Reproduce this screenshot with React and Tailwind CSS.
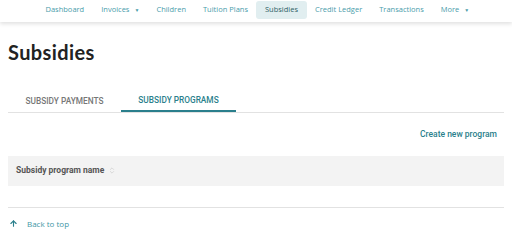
import { ArrowUp, ChevronsUpDown } from "lucide-react";

const NAV = [
  { label: "Dashboard" },
  { label: "Invoices", caret: true },
  { label: "Children" },
  { label: "Tuition Plans" },
  { label: "Subsidies", active: true },
  { label: "Credit Ledger" },
  { label: "Transactions" },
  { label: "More", caret: true },
];

export default function App() {
  return (
    <div className="w-[512px] h-[238px] bg-white overflow-hidden">
      {/* top nav */}
      <div className="h-[22px] flex items-start pl-[37px] shadow-[0_2px_4px_rgba(0,0,0,0.12)] font-['Open_Sans',sans-serif] text-[7.5px]">
        <div className="flex items-center pt-[1px]">
          {NAV.map((n) => (
            <div
              key={n.label}
              className={
                "h-[18px] px-[8.5px] rounded-[3px] flex items-center whitespace-nowrap " +
                (n.active ? "bg-[#e1eef0] text-[#2e5f66]" : "text-[#4a9dab]")
              }
            >
              {n.label}
              {n.caret && <span className="ml-[5px] text-[5px] leading-none">▼</span>}
            </div>
          ))}
        </div>
      </div>

      <div className="px-[8px]">
        <h1 className="mt-[17px] text-[20px] leading-[26px] font-bold text-[#222] font-['Lato',sans-serif] tracking-[0.4px]">
          Subsidies
        </h1>

        {/* tabs */}
        <div className="mt-[25px] flex border-b border-[#e2e2e2] font-['Roboto',sans-serif] text-[8.3px] font-medium">
          <div className="w-[113px] h-[22px] flex items-center justify-center text-[#777]">SUBSIDY PAYMENTS</div>
          <div className="w-[115px] h-[22px] flex items-center justify-center text-[#2a7f8c] border-b-2 border-[#2a7f8c] mb-[-1px]">
            SUBSIDY PROGRAMS
          </div>
        </div>

        <div className="flex justify-end pr-[7px] mt-[15px] font-['Roboto',sans-serif] text-[8.5px] font-medium text-[#2a7f8c]">
          Create new program
        </div>

        {/* table header */}
        <div className="mt-[15px] h-[30px] bg-[#f3f3f3] flex items-center pl-[8px] font-['Roboto',sans-serif] text-[8.5px] font-bold text-[#555]">
          Subsidy program name
          <ChevronsUpDown className="ml-[4px] w-[8px] h-[9px] text-[#bdbdbd]" strokeWidth={1.5} />
        </div>

        <div className="mt-[21px] border-t border-[#e2e2e2]" />

        <div className="mt-[10px] flex items-center gap-[9px] pl-[1px] font-['Open_Sans',sans-serif] text-[8px] text-[#3f97a6]">
          <ArrowUp className="w-[9px] h-[9px] text-[#2a7f8c]" strokeWidth={3} />
          Back to top
        </div>
      </div>
    </div>
  );
}
